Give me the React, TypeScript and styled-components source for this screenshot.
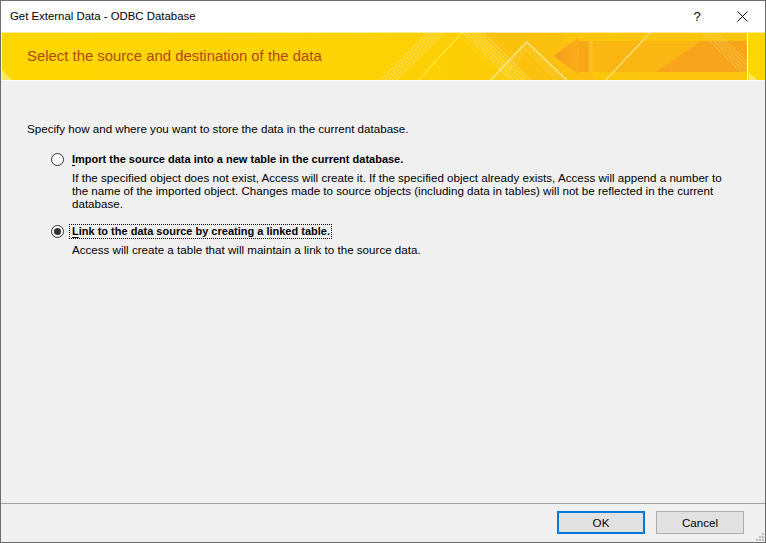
import {FC} from 'react'
import styled, {createGlobalStyle} from 'styled-components'

interface Option {
  id: string
  accessKey: string
  rest: string
  lines: string[]
  checked?: boolean
  focused?: boolean
}

const OPTIONS: Option[] = [
  {
    id: 'import',
    accessKey: 'I',
    rest: 'mport the source data into a new table in the current database.',
    lines: [
      'If the specified object does not exist, Access will create it. If the specified object already exists, Access will append a number to',
      'the name of the imported object. Changes made to source objects (including data in tables) will not be reflected in the current',
      'database.',
    ],
  },
  {
    id: 'link',
    accessKey: 'L',
    rest: 'ink to the data source by creating a linked table.',
    lines: ['Access will create a table that will maintain a link to the source data.'],
    checked: true,
    focused: true,
  },
]

const FONT = `"Segoe UI", "Liberation Sans", Arial, sans-serif`

const GlobalStyle = createGlobalStyle`
  html, body {
    margin: 0;
    padding: 0;
    background: #fff;
  }
  body {
    font-family: ${FONT};
    -webkit-font-smoothing: antialiased;
  }
`

/* Decorative artwork of the header banner, drawn in page coordinates */
const BannerArt: FC = () => (
  <ArtSvg viewBox="2 32 762 48" preserveAspectRatio="none">
    <defs>
      <linearGradient id="base" x1="0" x2="1" y1="0" y2="0">
        <stop offset="0" stopColor="#fed700" />
        <stop offset="0.5" stopColor="#fdd203" />
        <stop offset="0.75" stopColor="#fcc70b" />
        <stop offset="1" stopColor="#fcc40c" />
      </linearGradient>
      <linearGradient id="arrow" x1="0" x2="1" y1="0" y2="0">
        <stop offset="0" stopColor="#f59a1a" />
        <stop offset="1" stopColor="#f8ae17" />
      </linearGradient>
    </defs>
    <rect x="2" y="32" width="762" height="48" fill="url(#base)" />
    <polygon points="2,70 12,80 2,80" fill="#fde56a" />
    {/* left stripe group */}
    {[0, 4, 8, 12, 16].map((o) => (
      <line key={`a${o}`} x1={380 + o} y1={80} x2={428 + o} y2={32} stroke="#fde26a" strokeWidth="1" opacity="0.8" />
    ))}
    <line x1="418" y1="80" x2="462" y2="32" stroke="#ffe733" strokeWidth="1.5" />
    {/* darker band behind peak */}
    <polygon points="478,32 560,32 596,80 528,80" fill="#fbbe10" opacity="0.7" />
    {[0, 4, 8, 12, 16, 20].map((o) => (
      <line key={`b${o}`} x1={462 + o} y1={32} x2={510 + o} y2={80} stroke="#fde06a" strokeWidth="1" opacity="0.8" />
    ))}
    {/* peak */}
    <polyline points="490,80 526,42 566,80" fill="none" stroke="#fde590" strokeWidth="1.5" />
    {[3, 6, 9].map((o) => (
      <polyline key={`p${o}`} points={`${490 + o * 1.2},80 526,${42 + o} ${566 - o * 1.2},80`} fill="none" stroke="#fde06a" strokeWidth="0.8" opacity="0.6" />
    ))}
    {/* arrow */}
    <polygon points="553,56 578,37 578,75" fill="url(#arrow)" />
    <rect x="578" y="41" width="10" height="31" fill="#f7a61a" />
    <rect x="589" y="41" width="2" height="31" fill="#f9bb30" />
    <rect x="592" y="41" width="154" height="31" fill="#f9b316" opacity="0.8" />
    <line x1="605" y1="80" x2="650" y2="32" stroke="#fde07a" strokeWidth="1.5" opacity="0.9" />
    <polygon points="700,41 746,41 746,72 655,72" fill="#f7a41a" />
    {[0, 4, 8, 12, 16].map((o) => (
      <line key={`c${o}`} x1={700 + o} y1={32} x2={740 + o} y2={72} stroke="#fcd25a" strokeWidth="1" opacity="0.7" />
    ))}
    <rect x="746" y="32" width="18" height="48" fill="#fdd500" />
    <rect x="746" y="32" width="1" height="48" fill="#ffffff" />
    <polygon points="748,72 756,80 748,80" fill="#fde56a" />
    <rect x="2" y="32" width="762" height="1" fill="#ffffff" opacity="0.6" />
  </ArtSvg>
)

const CloseIcon: FC = () => (
  <svg width="11" height="11" viewBox="0 0 11 11">
    <path d="M0.5 0.5 L10.5 10.5 M10.5 0.5 L0.5 10.5" stroke="#000" strokeWidth="1" />
  </svg>
)

const Grip: FC = () => (
  <GripSvg width="9" height="9" viewBox="0 0 9 9">
    {[
      [7, 1],
      [4, 4],
      [7, 4],
      [1, 7],
      [4, 7],
      [7, 7],
    ].map(([x, y]) => (
      <rect key={`${x}-${y}`} x={x} y={y} width="2" height="2" fill="#b8b8b8" />
    ))}
  </GripSvg>
)

const App: FC = () => (
  <>
    <GlobalStyle />
    <Window>
      <TitleBar>
        <Title>Get External Data - ODBC Database</Title>
        <CaptionButton $width={46}>?</CaptionButton>
        <CaptionButton $width={45}>
          <CloseIcon />
        </CaptionButton>
      </TitleBar>

      <Banner>
        <BannerArt />
        <BannerText>Select the source and destination of the data</BannerText>
      </Banner>

      <Body>
        <Intro>Specify how and where you want to store the data in the current database.</Intro>
        <OptionList>
          {OPTIONS.map((opt) => (
            <OptionItem key={opt.id}>
              <Radio $checked={!!opt.checked} />
              <OptionLabel $focused={!!opt.focused}>
                <u>{opt.accessKey}</u>
                {opt.rest}
              </OptionLabel>
              <Description>
                {opt.lines.map((line) => (
                  <span key={line}>{line}</span>
                ))}
              </Description>
            </OptionItem>
          ))}
        </OptionList>
      </Body>

      <Footer>
        <Button $default>OK</Button>
        <Button>Cancel</Button>
        <Grip />
      </Footer>
    </Window>
  </>
)

const Window = styled.div`
  width: 766px;
  height: 543px;
  box-sizing: border-box;
  border: 1px solid #6e6e6e;
  background: #f0f0f0;
  display: flex;
  flex-direction: column;
  font-family: ${FONT};
  font-size: 11.6px;
  color: #000;
`
const TitleBar = styled.div`
  height: 31px;
  flex: none;
  display: flex;
  align-items: center;
  background: #fff;
`
const Title = styled.div`
  flex: 1;
  padding-left: 9px;
  font-size: 11.4px;
  padding-bottom: 1px;
`
const CaptionButton = styled.div<{$width: number}>`
  width: ${(p) => p.$width}px;
  height: 31px;
  display: flex;
  align-items: center;
  justify-content: center;
  font-size: 13px;
  padding-bottom: 1px;
`
const Banner = styled.div`
  position: relative;
  height: 48px;
  flex: none;
  margin-left: 1px;
  display: flex;
  align-items: center;
  padding-left: 25px;
  border-bottom: 1px solid #fbfbfb;
`
const ArtSvg = styled.svg`
  position: absolute;
  inset: 0;
  width: 100%;
  height: 100%;
`
const BannerText = styled.div`
  position: relative;
  font-size: 14.9px;
  color: #b24a12;
  padding-bottom: 1px;
`
const Body = styled.div`
  flex: 1;
  padding: 40px 26px 0;
`
const Intro = styled.p`
  margin: 0;
  line-height: 15px;
`
const OptionList = styled.div`
  margin-top: 16px;
  margin-left: 24px;
  display: flex;
  flex-direction: column;
  gap: 14px;
`
const OptionItem = styled.div`
  display: grid;
  grid-template-columns: 13px 1fr;
  column-gap: 8px;
  row-gap: 4px;
  align-items: center;
`
const Radio = styled.span<{$checked: boolean}>`
  width: 13px;
  height: 13px;
  box-sizing: border-box;
  border-radius: 50%;
  border: 1px solid #333;
  background: #fff;
  display: flex;
  align-items: center;
  justify-content: center;

  &::after {
    content: '';
    display: ${(p) => (p.$checked ? 'block' : 'none')};
    width: 7px;
    height: 7px;
    border-radius: 50%;
    background: #333;
  }
`
const OptionLabel = styled.div<{$focused: boolean}>`
  justify-self: start;
  font-weight: bold;
  font-size: 11px;
  line-height: 13px;
  padding: 0 1px 0 2px;
  margin-left: -3px;
  border: 1px dotted ${(p) => (p.$focused ? '#000' : 'transparent')};

  u {
    text-underline-offset: 2px;
  }
`
const Description = styled.div`
  grid-column: 2;
  display: flex;
  flex-direction: column;
  line-height: 13px;
  white-space: nowrap;
`
const Footer = styled.div`
  position: relative;
  height: 39px;
  flex: none;
  box-sizing: border-box;
  border-top: 1px solid #a0a0a0;
  display: flex;
  justify-content: flex-end;
  align-items: flex-start;
  gap: 11px;
  padding: 7px 21px 0 0;
`
const Button = styled.button<{$default?: boolean}>`
  width: 88px;
  height: 23px;
  box-sizing: border-box;
  background: #e1e1e1;
  border: ${(p) => (p.$default ? '2px solid #0078d7' : '1px solid #adadad')};
  font-family: ${FONT};
  font-size: 11.6px;
  color: #000;
  padding: 0;
  margin: 0;
`
const GripSvg = styled.svg`
  position: absolute;
  right: 1px;
  bottom: 1px;
`

export default App
